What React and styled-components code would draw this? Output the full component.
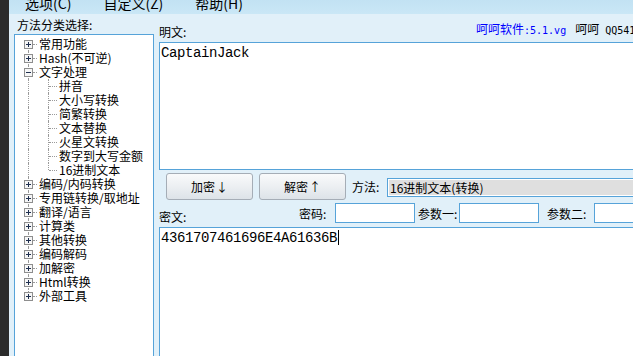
import React from "react";
import styled, { createGlobalStyle } from "styled-components";

const BLUE = "#56a3d9";
const PANEL = "#e1f0f9";

const GlobalStyle = createGlobalStyle`
  html, body {
    margin: 0;
    padding: 0;
    overflow: hidden;
    background: ${PANEL};
  }
  body {
    font-family: "Noto Sans CJK SC", "Liberation Sans", sans-serif;
    font-size: 12px;
    color: #000;
  }
`;

const Screen = styled.div`
  width: 633px;
  height: 356px;
  overflow: hidden;
  display: flex;
`;

const DarkStrip = styled.div`
  width: 9px;
  flex-shrink: 0;
  background: #2b2b2b;
`;

const Main = styled.div`
  flex: 1;
  display: flex;
  flex-direction: column;
  background: ${PANEL};
  min-width: 0;
`;

const MenuBar = styled.div`
  height: 14px;
  flex-shrink: 0;
  overflow: hidden;
  display: flex;
  gap: 32px;
  padding-left: 16px;
  background: linear-gradient(#c2e2f3, #cae7f6);
`;

const MenuItem = styled.span`
  font-size: 14px;
  line-height: 14px;
  margin-top: -4px;
  white-space: nowrap;
`;

const Body = styled.div`
  flex: 1;
  display: flex;
  min-height: 0;
`;

const Sidebar = styled.div`
  width: 150px;
  flex-shrink: 0;
  box-sizing: border-box;
  padding: 0 5px;
  display: flex;
  flex-direction: column;
`;

const SideLabel = styled.div`
  height: 20px;
  box-sizing: border-box;
  padding: 4px 0 0 3px;
  line-height: 14px;
  white-space: nowrap;
`;

const TreeBox = styled.div`
  flex: 1;
  background: #fff;
  border: 1px solid ${BLUE};
  border-bottom: none;
  padding-top: 2px;
`;

const Row = styled.div`
  height: 14px;
  display: flex;
  align-items: center;
  white-space: nowrap;
  line-height: 14px;
`;

const Gutter = styled.span`
  position: relative;
  width: 18px;
  height: 14px;
  margin-left: 4px;
  padding-left: 5px;
  box-sizing: border-box;
  display: flex;
  align-items: center;
  flex-shrink: 0;

  &::before {
    content: "";
    position: absolute;
    left: 9px;
    top: ${(p) => (p.$first ? "7px" : "0")};
    bottom: ${(p) => (p.$last ? "7px" : "0")};
    border-left: 1px dotted #9a9a9a;
  }
`;

const ChildGutter = styled.span`
  position: relative;
  width: 20px;
  height: 14px;
  flex-shrink: 0;

  &::before {
    content: "";
    position: absolute;
    left: 11px;
    top: 0;
    bottom: ${(p) => (p.$last ? "7px" : "0")};
    border-left: 1px dotted #9a9a9a;
  }
  &::after {
    content: "";
    position: absolute;
    left: 12px;
    right: 0;
    top: 7px;
    border-top: 1px dotted #9a9a9a;
  }
`;

const Dash = styled.span`
  width: 5px;
  border-top: 1px dotted #9a9a9a;
`;

const ToggleIcon = styled.svg`
  position: relative;
  display: block;
  flex-shrink: 0;
`;

const NodeText = styled.span`
  line-height: 14px;
  margin-left: 2px;
`;

const Content = styled.div`
  width: 520px;
  flex-shrink: 0;
  display: flex;
  flex-direction: column;
`;

const Header = styled.div`
  height: 28px;
  box-sizing: border-box;
  padding-bottom: 3px;
  display: grid;
  grid-template-columns: 317px auto;
  align-items: end;
  line-height: 14px;
  white-space: nowrap;
`;

const Info = styled.div`
  display: flex;
  align-items: baseline;
  padding-bottom: 1px;
`;

const InfoPart = styled.span`
  color: ${(p) => p.$color || "#000"};
  margin-left: ${(p) => p.$gap || 0}px;
`;

const Mono = styled.span`
  font-family: "DejaVu Sans Mono", "Liberation Mono", monospace;
  font-size: 10px;
  white-space: pre;
`;

const TextBox = styled.div`
  background: #fff;
  border: 1px solid ${BLUE};
  box-sizing: border-box;
  padding: 2px 1px;
  font-family: "Liberation Mono", monospace;
  font-size: 14px;
  letter-spacing: -0.4px;
  line-height: 16px;
  height: ${(p) => (p.$height ? `${p.$height}px` : "auto")};
  flex: ${(p) => (p.$grow ? 1 : "none")};
  border-bottom: ${(p) => (p.$grow ? "none" : `1px solid ${BLUE}`)};
`;

const Caret = styled.span`
  display: inline-block;
  width: 1px;
  height: 15px;
  background: #000;
  vertical-align: -3px;
  margin-left: 1px;
`;

const ActionRow = styled.div`
  height: 30px;
  display: flex;
  align-items: flex-start;
  padding-left: 7px;
`;

const Button = styled.button`
  width: 87px;
  height: 27px;
  margin-top: 3px;
  margin-right: 6px;
  padding: 0;
  box-sizing: border-box;
  border: 1px solid #a5adb6;
  border-radius: 3px;
  background: linear-gradient(#f9fafb, #eceff2 50%, #dde3e8);
  font-family: "Noto Sans CJK SC", sans-serif;
  font-size: 12px;
  color: #000;
  display: flex;
  align-items: center;
  justify-content: center;
`;

const Arrow = styled.span`
  font-size: 12px;
  margin-left: 1px;
`;

const FieldLabel = styled.span`
  width: ${(p) => p.$width}px;
  padding-left: ${(p) => p.$pad || 0}px;
  padding-top: ${(p) => p.$top || 0}px;
  box-sizing: border-box;
  line-height: 14px;
  white-space: nowrap;
  flex-shrink: 0;
`;

const Select = styled.div`
  flex: 1;
  height: 19px;
  margin-top: 8px;
  box-sizing: border-box;
  border: 1px solid ${BLUE};
  padding: 1px;
  background: #fff;
`;

const SelectValue = styled.div`
  height: 15px;
  background: #dfdfdf;
  line-height: 15px;
  padding-left: 1px;
  white-space: nowrap;
`;

const ParamRow = styled.div`
  height: 27px;
  display: grid;
  grid-template-columns: 140px 36px 80px 44px 80px 55px 80px;
  align-items: center;
`;

const Input = styled.div`
  height: 20px;
  margin-top: 3px;
  box-sizing: border-box;
  border: 1px solid ${BLUE};
  background: #fff;
  align-self: start;
`;

function Toggle({ open }) {
  return (
    <ToggleIcon width="9" height="9" viewBox="0 0 9 9">
      <rect x="0.5" y="0.5" width="8" height="8" fill="#f6f6f6" stroke="#8e8e8e" />
      <path d="M2 4.5h5" stroke="#1f2f4f" />
      {!open && <path d="M4.5 2v5" stroke="#1f2f4f" />}
    </ToggleIcon>
  );
}

const tree = [
  { label: "常用功能" },
  { label: "Hash(不可逆)" },
  {
    label: "文字处理",
    open: true,
    children: ["拼音", "大小写转换", "简繁转换", "文本替换", "火星文转换", "数字到大写金额", "16进制文本"],
  },
  { label: "编码/内码转换" },
  { label: "专用链转换/取地址" },
  { label: "翻译/语言" },
  { label: "计算类" },
  { label: "其他转换" },
  { label: "编码解码" },
  { label: "加解密" },
  { label: "Html转换" },
  { label: "外部工具" },
];

function Tree() {
  const last = tree.length - 1;
  return (
    <TreeBox>
      {tree.map((node, i) => (
        <React.Fragment key={node.label}>
          <Row>
            <Gutter $first={i === 0} $last={i === last}>
              <Toggle open={node.open} />
              <Dash />
            </Gutter>
            <NodeText>{node.label}</NodeText>
          </Row>
          {node.open &&
            node.children.map((child, j) => (
              <Row key={child}>
                <Gutter />
                <ChildGutter $last={j === node.children.length - 1} />
                <NodeText>{child}</NodeText>
              </Row>
            ))}
        </React.Fragment>
      ))}
    </TreeBox>
  );
}

export default function App() {
  return (
    <>
      <GlobalStyle />
      <Screen>
        <DarkStrip />
        <Main>
          <MenuBar>
            <MenuItem>选项(C)</MenuItem>
            <MenuItem>自定义(Z)</MenuItem>
            <MenuItem>帮助(H)</MenuItem>
          </MenuBar>
          <Body>
            <Sidebar>
              <SideLabel>方法分类选择:</SideLabel>
              <Tree />
            </Sidebar>
            <Content>
              <Header>
                <span>明文:</span>
                <Info>
                  <InfoPart $color="#0000ff">
                    呵呵软件<Mono>:5.1.vg</Mono>
                  </InfoPart>
                  <InfoPart $gap={9}>
                    呵呵<Mono> QQ541</Mono>
                  </InfoPart>
                </Info>
              </Header>
              <TextBox $height={128}>CaptainJack</TextBox>
              <ActionRow>
                <Button>
                  加密<Arrow>↓</Arrow>
                </Button>
                <Button>
                  解密<Arrow>↑</Arrow>
                </Button>
                <FieldLabel $width={35} $top={10} $pad={-3}>方法:</FieldLabel>
                <Select>
                  <SelectValue>16进制文本(转换)</SelectValue>
                </Select>
              </ActionRow>
              <ParamRow>
                <FieldLabel $width={140} $top={6}>密文:</FieldLabel>
                <FieldLabel $width={36}>密码:</FieldLabel>
                <Input />
                <FieldLabel $width={44} $pad={3}>参数一:</FieldLabel>
                <Input />
                <FieldLabel $width={55} $pad={8}>参数二:</FieldLabel>
                <Input />
              </ParamRow>
              <TextBox $grow>
                4361707461696E4A61636B
                <Caret />
              </TextBox>
            </Content>
          </Body>
        </Main>
      </Screen>
    </>
  );
}
